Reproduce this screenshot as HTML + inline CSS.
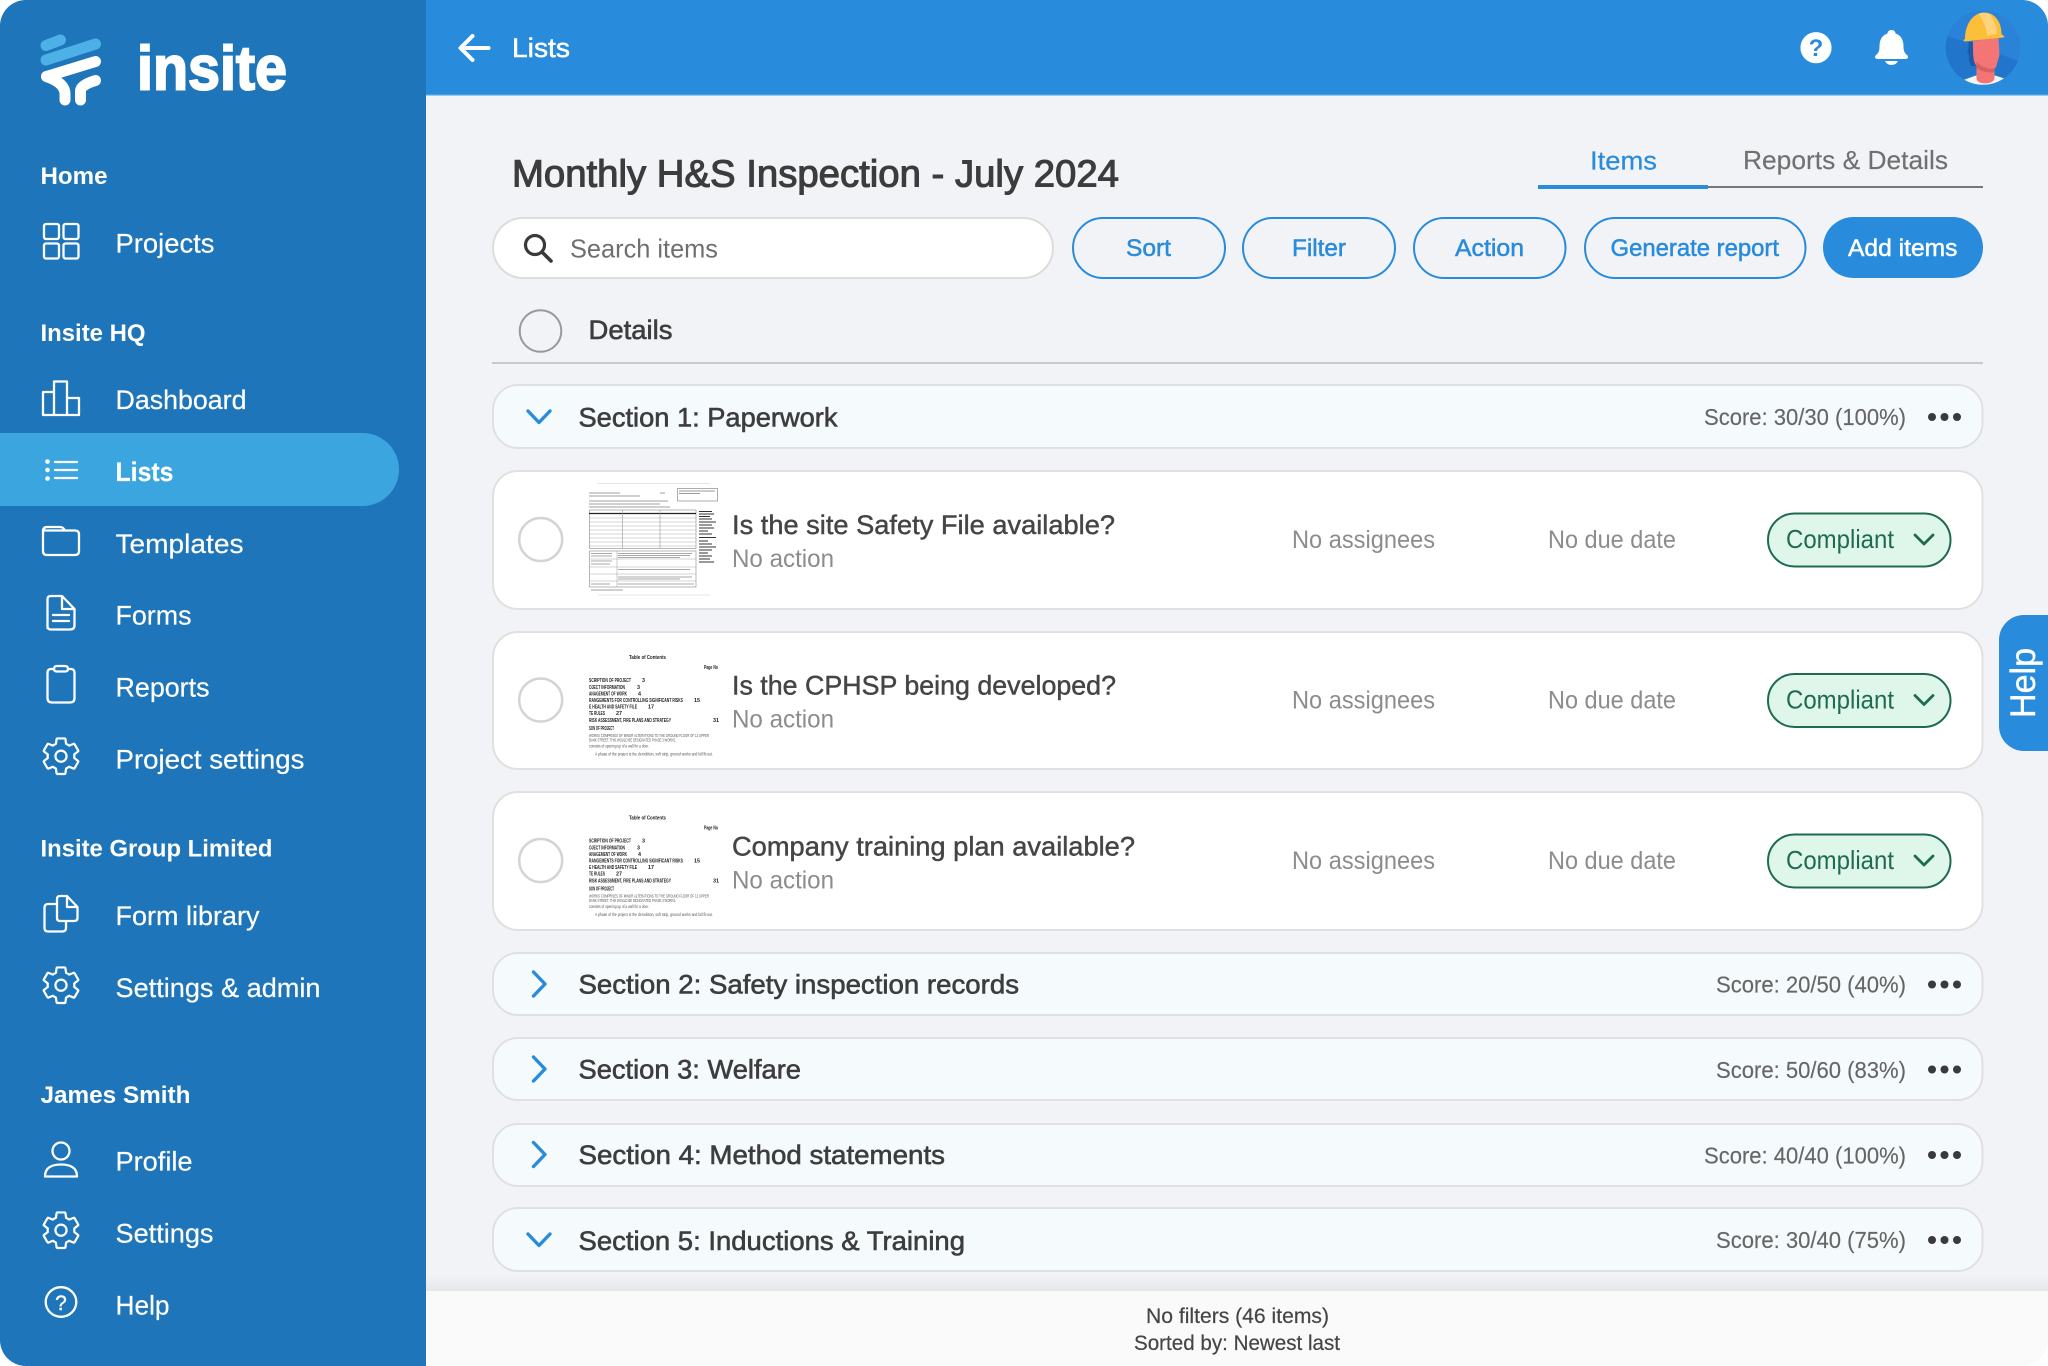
<!DOCTYPE html>
<html lang="en">
<head>
<meta charset="utf-8">
<title>Insite - Lists</title>
<style>
html,body{margin:0;padding:0;background:#fff;width:2048px;height:1366px;overflow:hidden}
svg{display:block}
text{font-family:"Liberation Sans",Arial,sans-serif}
.nav{font-size:27px;fill:#fff;stroke:#fff;stroke-width:.2px}
.head{font-size:24px;fill:#fff;font-weight:700}
.m{stroke-width:.5px}
.ico{fill:none;stroke:#fff;stroke-width:2.3;stroke-linejoin:round;stroke-linecap:round}
.sec{font-size:27px;fill:#3d3d3d;stroke:#3d3d3d;stroke-width:.6px}
.score{font-size:23px;fill:#666;stroke:#666;stroke-width:.15px}
.q{font-size:27px;fill:#454545;stroke:#454545;stroke-width:.45px}
.sub{font-size:25px;fill:#8c8c8c}
.btn{font-size:24px;fill:#288bdb;stroke:#288bdb;stroke-width:.5px}
.cmp{font-size:26px;fill:#1f6b52}
.t{font-size:5.400px;fill:#222;font-weight:700}
.tl{font-size:4.800px;fill:#555}
</style>
</head>
<body>
<svg xmlns="http://www.w3.org/2000/svg" width="2048" height="1366" viewBox="0 0 2048 1366">
<defs>
<clipPath id="page"><rect width="2048" height="1366" rx="26"/></clipPath>
<clipPath id="av"><circle cx="1983" cy="47.500" r="37.300"/></clipPath>
<linearGradient id="fs" x1="0" y1="0" x2="0" y2="1"><stop offset="0" stop-color="#000" stop-opacity="0"/><stop offset="1" stop-color="#000" stop-opacity=".05"/></linearGradient>
<path id="gear" d="M19.14 12.94c.04-.3.06-.61.06-.94 0-.32-.02-.64-.07-.94l2.03-1.58a.49.49 0 0 0 .12-.61l-1.92-3.32a.488.488 0 0 0-.59-.22l-2.39.96c-.5-.38-1.03-.7-1.62-.94l-.36-2.54a.484.484 0 0 0-.48-.41h-3.84c-.24 0-.43.17-.47.41l-.36 2.54c-.59.24-1.13.57-1.62.94l-2.39-.96c-.22-.08-.47 0-.59.22L2.74 8.87c-.12.21-.08.47.12.61l2.03 1.58c-.05.3-.09.63-.09.94s.02.64.07.94l-2.03 1.58a.49.49 0 0 0-.12.61l1.92 3.32c.12.22.37.29.59.22l2.39-.96c.5.38 1.03.7 1.62.94l.36 2.54c.05.24.24.41.48.41h3.84c.24 0 .44-.17.47-.41l.36-2.54c.59-.24 1.13-.56 1.62-.94l2.39.96c.22.08.47 0 .59-.22l1.92-3.32c.12-.22.07-.47-.12-.61l-2.01-1.58z"/>
</defs>
<g clip-path="url(#page)">
<rect width="2048" height="1366" fill="#f2f3f7"/>
<!-- top bar -->
<rect x="426" width="1622" height="95" fill="#288bdb"/>
<rect x="426" y="94" width="1622" height="1.500" fill="#4a9ee2"/>
<path d="M488.500 48H461M472.500 36L460.500 48L472.500 60" fill="none" stroke="#fff" stroke-width="4" stroke-linecap="round" stroke-linejoin="round"/>
<text x="512" y="57" class="nav m" textLength="58" lengthAdjust="spacingAndGlyphs">Lists</text>
<circle cx="1816" cy="47.700" r="15.600" fill="#fff"/>
<text x="1816" y="56" font-size="24" font-weight="700" fill="#288bdb" text-anchor="middle">?</text>
<path d="M1891.500 30c3 0 4 2 4 3.500c6 2 8 7 8 13c0 5 1.500 7 4 9q1.500 3-2 3.500h-28q-3.500-.5-2-3.500c2.500-2 4-4 4-9c0-6 2-11 8-13c0-1.500 1-3.500 4-3.500z" fill="#fff"/>
<path d="M1885 61h13q-2 4-6.500 4t-6.500-4z" fill="#fff"/>
<g clip-path="url(#av)">
<circle cx="1983" cy="47.500" r="37.300" fill="#2a83d8"/>
<path d="M1983 47L1940 34L1940 90L1972 90zM1983 47L2025 64L2015 90L1990 90z" fill="#2176cc"/>
<path d="M1962 80.500L1976 75.500H1995L2006 79L2004 92H1964z" fill="#f5f5f5"/>
<path d="M1968.500 42L1976 42L1976.500 66L1971 66Q1968 60 1969 55Q1966 52 1968.500 48z" fill="#1b5aa8"/>
<path d="M1973 41L1998.500 37.500L1999.500 55L1997 64Q1996 68 1994.500 68.500V78Q1994 83 1985 83.500Q1976.500 83 1976.500 78V66Q1973 62 1973 50z" fill="#f37575"/>
<path d="M1976.500 62Q1985 70 1994.500 68.500V72Q1985 74 1976.500 68z" fill="#da6060"/>
<path d="M1965 39C1965 22 1975 12.500 1984 12.500C1995 12.500 2001.500 22 2001.500 34L2004.500 36.500L2003.500 37.500L1964 41.500L1963.300 40z" fill="#fdbe3a"/>
<path d="M1979 13.500Q1985 12 1990 14.500Q1996 22 1997 33.500L1987.500 35.500Q1985 23 1979 13.500z" fill="#fdd37e"/>
</g>
<!-- sidebar -->
<rect width="426" height="1366" fill="#1f75b9"/>
<path d="M0 433H362A36.500 36.500 0 0 1 399 470A36.500 36.500 0 0 1 362 506H0z" fill="#3ba5e0"/>
<!-- logo -->
<g fill="none" stroke-linecap="round" stroke-linejoin="round" stroke-width="11">
<path d="M46 45.500L60.500 40" stroke="#4db1e8"/>
<path d="M46 60L95.500 44" stroke="#4db1e8"/>
<path d="M95.500 61.500L46.500 76.500" stroke="#fff"/>
<path d="M46.500 76.500Q65 83 65 94V100" stroke="#fff"/>
<path d="M80.500 100V91Q80.500 85 95.500 80.500" stroke="#fff"/>
</g>
<text x="137" y="89.500" font-size="62" font-weight="700" fill="#fff" stroke="#fff" stroke-width="2" textLength="150" lengthAdjust="spacingAndGlyphs">insite</text>
<text x="40.500" y="184" class="head" textLength="67" lengthAdjust="spacingAndGlyphs">Home</text>
<text x="115.500" y="252.500" class="nav" textLength="99" lengthAdjust="spacingAndGlyphs">Projects</text>
<text x="40.500" y="341" class="head" textLength="105" lengthAdjust="spacingAndGlyphs">Insite HQ</text>
<text x="115.500" y="409" class="nav" textLength="131" lengthAdjust="spacingAndGlyphs">Dashboard</text>
<text x="115.500" y="481" class="nav" font-weight="700" textLength="58" lengthAdjust="spacingAndGlyphs">Lists</text>
<text x="115.500" y="553" class="nav" textLength="128" lengthAdjust="spacingAndGlyphs">Templates</text>
<text x="115.500" y="624.500" class="nav" textLength="76" lengthAdjust="spacingAndGlyphs">Forms</text>
<text x="115.500" y="696.500" class="nav" textLength="94" lengthAdjust="spacingAndGlyphs">Reports</text>
<text x="115.500" y="768.500" class="nav" textLength="189" lengthAdjust="spacingAndGlyphs">Project settings</text>
<text x="40.500" y="856.500" class="head" textLength="232" lengthAdjust="spacingAndGlyphs">Insite Group Limited</text>
<text x="115.500" y="925" class="nav" textLength="144" lengthAdjust="spacingAndGlyphs">Form library</text>
<text x="115.500" y="997" class="nav" textLength="205" lengthAdjust="spacingAndGlyphs">Settings &amp; admin</text>
<text x="40.500" y="1103" class="head" textLength="150" lengthAdjust="spacingAndGlyphs">James Smith</text>
<text x="115.500" y="1170.700" class="nav" textLength="77" lengthAdjust="spacingAndGlyphs">Profile</text>
<text x="115.500" y="1242.700" class="nav" textLength="98" lengthAdjust="spacingAndGlyphs">Settings</text>
<text x="115.500" y="1314.700" class="nav" textLength="54" lengthAdjust="spacingAndGlyphs">Help</text>
<!-- sidebar icons -->
<g class="ico">
<rect x="44" y="224" width="15" height="15" rx="2"/><rect x="63.500" y="224" width="15" height="15" rx="2"/>
<rect x="44" y="243.500" width="15" height="15" rx="2"/><rect x="63.500" y="243.500" width="15" height="15" rx="2"/>
<path d="M43 415V392H54V415zM54 415V381.500H67V415zM67 415V398H79V415zM43 415H79"/>
<path d="M55 462H77M55 470H77M55 478H77"/>
<path d="M43 531.500Q43 527 47 527H60Q63 527 65 530.500H43M43 530.500V551Q43 555 47 555H75Q79 555 79 551V534.500Q79 530.500 75 530.500H65"/>
<path d="M47.500 628V599Q47.500 596 51 596H62L74.500 609V625Q74.500 629.500 70 629.500H51Q47.500 629.500 47.500 626zM62 596V609H74.500M53 615H69M53 621H69"/>
<path d="M54 669H51Q47.500 669 47.500 673V698Q47.500 702.500 52 702.500H70Q74.500 702.500 74.500 698V673Q74.500 669 71 669H68M54 669Q54 666 57 666H65Q68 666 68 669Q68 671.500 65 671.500H57Q54 671.500 54 669z"/>
<path d="M57 904H48Q44.500 904 44.500 908V928Q44.500 931.500 48 931.500H62Q66 931.500 66 928V921M57 899Q57 896 60 896H67L77.500 907V918Q77.500 921 74 921H60Q57 921 57 918zM67 896V907H77.500"/>
<path d="M52.500 1151a8.500 8.500 0 1 0 17 0a8.500 8.500 0 1 0-17 0zM45 1176.500Q45 1164.500 61 1164.500Q77 1164.500 77 1176.500z"/>
<ellipse cx="61" cy="1302" rx="15.300" ry="14.800"/>
</g>
<circle cx="47.500" cy="461.500" r="2.300" fill="#fff"/><circle cx="47.500" cy="470" r="2.300" fill="#fff"/><circle cx="47.500" cy="478.500" r="2.300" fill="#fff"/>
<text x="61" y="1310" font-size="21" fill="#fff" stroke="#fff" stroke-width=".4" text-anchor="middle">?</text>
<g fill="none" stroke="#fff" stroke-linejoin="round">
<g transform="translate(38.800 734) scale(1.850)" stroke-width="1.200"><use href="#gear"/><circle cx="12" cy="12" r="3"/></g>
<g transform="translate(38.800 963) scale(1.850)" stroke-width="1.200"><use href="#gear"/><circle cx="12" cy="12" r="3"/></g>
<g transform="translate(38.800 1208) scale(1.850)" stroke-width="1.200"><use href="#gear"/><circle cx="12" cy="12" r="3"/></g>
</g>
<!-- title + tabs -->
<text x="512" y="186.700" font-size="38" fill="#3c3c3c" stroke="#3c3c3c" stroke-width="1.100" textLength="607" lengthAdjust="spacingAndGlyphs">Monthly H&amp;S Inspection - July 2024</text>
<text x="1590" y="169.500" font-size="26" fill="#288bdb" stroke="#288bdb" stroke-width=".2" textLength="67" lengthAdjust="spacingAndGlyphs">Items</text>
<text x="1743" y="169" font-size="26" fill="#707070" stroke="#707070" stroke-width=".15" textLength="205" lengthAdjust="spacingAndGlyphs">Reports &amp; Details</text>
<rect x="1708" y="186" width="275" height="2" fill="#777"/>
<rect x="1538" y="185" width="170" height="4" fill="#288bdb"/>
<!-- search -->
<rect x="493" y="218" width="560" height="60" rx="30" fill="#fff" stroke="#dcdcdc" stroke-width="2"/>
<circle cx="535" cy="245" r="9.500" fill="none" stroke="#3a3a3a" stroke-width="3.200"/>
<path d="M542 252L551 261" stroke="#3a3a3a" stroke-width="3.600" stroke-linecap="round"/>
<text x="570" y="257.500" font-size="26" fill="#6f6f6f" textLength="148" lengthAdjust="spacingAndGlyphs">Search items</text>
<!-- buttons -->
<g fill="none" stroke="#288bdb" stroke-width="2">
<rect x="1073" y="218" width="152" height="60" rx="30"/>
<rect x="1243" y="218" width="152" height="60" rx="30"/>
<rect x="1414" y="218" width="151.500" height="60" rx="30"/>
<rect x="1585" y="218" width="220.500" height="60" rx="30"/>
</g>
<rect x="1823" y="217" width="160" height="61" rx="30.500" fill="#288bdb"/>
<text x="1126" y="256" class="btn" textLength="45" lengthAdjust="spacingAndGlyphs">Sort</text>
<text x="1292" y="256" class="btn" textLength="54" lengthAdjust="spacingAndGlyphs">Filter</text>
<text x="1455" y="256" class="btn" textLength="69" lengthAdjust="spacingAndGlyphs">Action</text>
<text x="1610.500" y="256" class="btn" textLength="168.500" lengthAdjust="spacingAndGlyphs">Generate report</text>
<text x="1848" y="256" class="btn" style="fill:#fff;stroke:#fff" textLength="109.500" lengthAdjust="spacingAndGlyphs">Add items</text>
<!-- details -->
<circle cx="540.500" cy="331" r="20.800" fill="none" stroke="#999" stroke-width="2"/>
<text x="588.500" y="339" class="sec" textLength="84" lengthAdjust="spacingAndGlyphs">Details</text>
<rect x="492" y="362" width="1491" height="2" fill="#c9c9c9"/>
<!-- section rows -->
<g fill="#f5fafd" stroke="#e0e0e0" stroke-width="2">
<rect x="493" y="385" width="1489.500" height="63" rx="25"/>
<rect x="493" y="953" width="1489.500" height="62" rx="25"/>
<rect x="493" y="1038" width="1489.500" height="62" rx="25"/>
<rect x="493" y="1124" width="1489.500" height="62" rx="25"/>
<rect x="493" y="1208" width="1489.500" height="63" rx="25"/>
</g>
<g fill="none" stroke="#288bdb" stroke-width="3.400" stroke-linecap="round" stroke-linejoin="round">
<path d="M528 411L539 422.500L550 411"/>
<path d="M533.500 972L545 984L533.500 996"/>
<path d="M533.500 1057L545 1069L533.500 1081"/>
<path d="M533.500 1142.500L545 1154.500L533.500 1166.500"/>
<path d="M528 1234L539 1245.500L550 1234"/>
</g>
<text x="578.500" y="426.500" class="sec" textLength="259" lengthAdjust="spacingAndGlyphs">Section 1: Paperwork</text>
<text x="578.500" y="993.700" class="sec" textLength="440.500" lengthAdjust="spacingAndGlyphs">Section 2: Safety inspection records</text>
<text x="578.500" y="1078.700" class="sec" textLength="222.500" lengthAdjust="spacingAndGlyphs">Section 3: Welfare</text>
<text x="578.500" y="1164.200" class="sec" textLength="366.500" lengthAdjust="spacingAndGlyphs">Section 4: Method statements</text>
<text x="578.500" y="1250" class="sec" textLength="386.500" lengthAdjust="spacingAndGlyphs">Section 5: Inductions &amp; Training</text>
<text x="1704" y="425" class="score" textLength="202" lengthAdjust="spacingAndGlyphs">Score: 30/30 (100%)</text>
<text x="1716" y="992.500" class="score" textLength="190" lengthAdjust="spacingAndGlyphs">Score: 20/50 (40%)</text>
<text x="1716" y="1078" class="score" textLength="190" lengthAdjust="spacingAndGlyphs">Score: 50/60 (83%)</text>
<text x="1704" y="1163.500" class="score" textLength="202" lengthAdjust="spacingAndGlyphs">Score: 40/40 (100%)</text>
<text x="1716" y="1248" class="score" textLength="190" lengthAdjust="spacingAndGlyphs">Score: 30/40 (75%)</text>
<g fill="#3a3a3a">
<circle cx="1932" cy="417" r="4"/><circle cx="1944.500" cy="417" r="4"/><circle cx="1957" cy="417" r="4"/>
<circle cx="1932" cy="984.500" r="4"/><circle cx="1944.500" cy="984.500" r="4"/><circle cx="1957" cy="984.500" r="4"/>
<circle cx="1932" cy="1069.500" r="4"/><circle cx="1944.500" cy="1069.500" r="4"/><circle cx="1957" cy="1069.500" r="4"/>
<circle cx="1932" cy="1155" r="4"/><circle cx="1944.500" cy="1155" r="4"/><circle cx="1957" cy="1155" r="4"/>
<circle cx="1932" cy="1240" r="4"/><circle cx="1944.500" cy="1240" r="4"/><circle cx="1957" cy="1240" r="4"/>
</g>
<!-- cards -->
<g fill="#fff" stroke="#e0e0e0" stroke-width="2">
<rect x="493" y="471" width="1489.500" height="138" rx="25"/>
<rect x="493" y="632" width="1489.500" height="137" rx="25"/>
<rect x="493" y="792" width="1489.500" height="138" rx="25"/>
</g>
<g fill="none" stroke="#d4d4d4" stroke-width="2.500">
<circle cx="540.700" cy="539.500" r="21.500"/><circle cx="540.700" cy="700" r="21.500"/><circle cx="540.700" cy="860.500" r="21.500"/>
</g>
<!-- thumb 1 -->
<g fill="none" stroke="#555" stroke-width=".6">
<path d="M598 483.500H710M598 595H710" stroke="#ccc"/>
<path d="M589 493H620M589 496H640M660 493H665M589 501H668M589 504H660M589 507H670" stroke="#444"/>
<rect x="677.500" y="488.500" width="40" height="12.500" stroke="#777"/>
<path d="M679 491H715M679 493.500H700" stroke="#333"/>
<rect x="589.500" y="510" width="106.500" height="38.500" stroke="#888"/>
<path d="M589 513.500H696" stroke="#222" stroke-width="1.200"/>
<path d="M589 518H696M589 522H696M589 526H696M589 530H696M589 534H696M589 538H696M589 542H696M589 546H696" stroke="#aaa"/>
<path d="M622.500 510V548M660 510V548" stroke="#999"/>
<rect x="589.500" y="551" width="106.500" height="36" stroke="#888"/>
<path d="M617 551V587M589 559H696M589 567H696M589 574H696M589 581H696" stroke="#aaa"/>
<path d="M618 553.500H692M618 555.500H690M618 557.500H680M591 553.500H612M591 556H612M591 561H612M591 564H610M618 569.500H690M618 577H692M618 579H680M591 584H610M618 584H694" stroke="#555"/>
<path d="M699 511.500H712M699 514H714M699 516.500H710M699 519H712M699 522H716M699 525H712M699 528H714M699 531H708M699 534H712M699 537.500H716M699 541H708M699 544H712M699 547H716M699 550H712M699 553H708M699 556H712M699 559H710M699 562H714" stroke="#333" stroke-width=".9"/>
<path d="M591 590H623" stroke="#444"/>
</g>
<!-- thumb 2 -->
<g>
<text x="629" y="659" class="t" textLength="37" lengthAdjust="spacingAndGlyphs">Table of Contents</text>
<text x="704" y="669" class="t" textLength="14" lengthAdjust="spacingAndGlyphs">Page No</text>
<text x="589" y="682" class="t" textLength="42" lengthAdjust="spacingAndGlyphs">SCRIPTION OF PROJECT</text><text x="642" y="682" class="t">3</text>
<text x="589" y="689" class="t" textLength="36" lengthAdjust="spacingAndGlyphs">OJECT INFORMATION</text><text x="637" y="689" class="t">3</text>
<text x="589" y="695.500" class="t" textLength="38" lengthAdjust="spacingAndGlyphs">ANAGEMENT OF WORK</text><text x="638" y="695.500" class="t">4</text>
<text x="589" y="702" class="t" textLength="94" lengthAdjust="spacingAndGlyphs">RANGEMENTS FOR CONTROLLING SIGNIFICANT RISKS</text><text x="694" y="702" class="t">15</text>
<text x="589" y="708.500" class="t" textLength="48" lengthAdjust="spacingAndGlyphs">E HEALTH AND SAFETY FILE</text><text x="648" y="708.500" class="t">17</text>
<text x="589" y="715" class="t" textLength="16" lengthAdjust="spacingAndGlyphs">TE RULES</text><text x="616" y="715" class="t">27</text>
<text x="589" y="722" class="t" textLength="82" lengthAdjust="spacingAndGlyphs">RISK ASSESSMENT, FIRE PLANS AND STRATEGY</text><text x="713" y="722" class="t">31</text>
<text x="589" y="730" class="t" textLength="25" lengthAdjust="spacingAndGlyphs">SON OF PROJECT</text>
<text x="589" y="737" class="tl" textLength="120" lengthAdjust="spacingAndGlyphs">WORKS COMPRISES OF MINOR ALTERATIONS TO THE GROUND FLOOR OF 12 UPPER</text>
<text x="589" y="741.500" class="tl" textLength="87" lengthAdjust="spacingAndGlyphs">BANK STREET. THIS WOULD BE DESIGNATED PHASE 3 WORKS.</text>
<text x="589" y="747.500" class="tl" textLength="60" lengthAdjust="spacingAndGlyphs">consists of opening up of a wall for a door.</text>
<text x="595" y="755.500" class="tl" textLength="118" lengthAdjust="spacingAndGlyphs">A phase of the project is the demolition, soft strip, ground works and full fit-out.</text>
</g>
<!-- thumb 3 -->
<g>
<text x="629" y="819.600" class="t" textLength="37" lengthAdjust="spacingAndGlyphs">Table of Contents</text>
<text x="704" y="829.600" class="t" textLength="14" lengthAdjust="spacingAndGlyphs">Page No</text>
<text x="589" y="842.600" class="t" textLength="42" lengthAdjust="spacingAndGlyphs">SCRIPTION OF PROJECT</text><text x="642" y="842.600" class="t">3</text>
<text x="589" y="849.600" class="t" textLength="36" lengthAdjust="spacingAndGlyphs">OJECT INFORMATION</text><text x="637" y="849.600" class="t">3</text>
<text x="589" y="856.100" class="t" textLength="38" lengthAdjust="spacingAndGlyphs">ANAGEMENT OF WORK</text><text x="638" y="856.100" class="t">4</text>
<text x="589" y="862.600" class="t" textLength="94" lengthAdjust="spacingAndGlyphs">RANGEMENTS FOR CONTROLLING SIGNIFICANT RISKS</text><text x="694" y="862.600" class="t">15</text>
<text x="589" y="869.100" class="t" textLength="48" lengthAdjust="spacingAndGlyphs">E HEALTH AND SAFETY FILE</text><text x="648" y="869.100" class="t">17</text>
<text x="589" y="875.600" class="t" textLength="16" lengthAdjust="spacingAndGlyphs">TE RULES</text><text x="616" y="875.600" class="t">27</text>
<text x="589" y="882.600" class="t" textLength="82" lengthAdjust="spacingAndGlyphs">RISK ASSESSMENT, FIRE PLANS AND STRATEGY</text><text x="713" y="882.600" class="t">31</text>
<text x="589" y="890.600" class="t" textLength="25" lengthAdjust="spacingAndGlyphs">SON OF PROJECT</text>
<text x="589" y="897.600" class="tl" textLength="120" lengthAdjust="spacingAndGlyphs">WORKS COMPRISES OF MINOR ALTERATIONS TO THE GROUND FLOOR OF 12 UPPER</text>
<text x="589" y="902.100" class="tl" textLength="87" lengthAdjust="spacingAndGlyphs">BANK STREET. THIS WOULD BE DESIGNATED PHASE 3 WORKS.</text>
<text x="589" y="908.100" class="tl" textLength="60" lengthAdjust="spacingAndGlyphs">consists of opening up of a wall for a door.</text>
<text x="595" y="916.100" class="tl" textLength="118" lengthAdjust="spacingAndGlyphs">A phase of the project is the demolition, soft strip, ground works and full fit-out.</text>
</g>
<!-- card text -->
<text x="732" y="534" class="q" textLength="383" lengthAdjust="spacingAndGlyphs">Is the site Safety File available?</text>
<text x="732" y="567" class="sub" textLength="102" lengthAdjust="spacingAndGlyphs">No action</text>
<text x="1292" y="548" class="sub" textLength="143" lengthAdjust="spacingAndGlyphs">No assignees</text>
<text x="1548" y="548" class="sub" textLength="128" lengthAdjust="spacingAndGlyphs">No due date</text>
<text x="732" y="694.600" class="q" textLength="384" lengthAdjust="spacingAndGlyphs">Is the CPHSP being developed?</text>
<text x="732" y="727.600" class="sub" textLength="102" lengthAdjust="spacingAndGlyphs">No action</text>
<text x="1292" y="708.600" class="sub" textLength="143" lengthAdjust="spacingAndGlyphs">No assignees</text>
<text x="1548" y="708.600" class="sub" textLength="128" lengthAdjust="spacingAndGlyphs">No due date</text>
<text x="732" y="855.300" class="q" textLength="403" lengthAdjust="spacingAndGlyphs">Company training plan available?</text>
<text x="732" y="888.300" class="sub" textLength="102" lengthAdjust="spacingAndGlyphs">No action</text>
<text x="1292" y="869" class="sub" textLength="143" lengthAdjust="spacingAndGlyphs">No assignees</text>
<text x="1548" y="869" class="sub" textLength="128" lengthAdjust="spacingAndGlyphs">No due date</text>
<!-- compliant pills -->
<g fill="#dff6ea" stroke="#1f6b52" stroke-width="2">
<rect x="1768" y="513.500" width="182.500" height="53" rx="26.500"/>
<rect x="1768" y="674" width="182.500" height="53" rx="26.500"/>
<rect x="1768" y="834.500" width="182.500" height="53" rx="26.500"/>
</g>
<text x="1786" y="548" class="cmp" textLength="108" lengthAdjust="spacingAndGlyphs">Compliant</text>
<text x="1786" y="708.500" class="cmp" textLength="108" lengthAdjust="spacingAndGlyphs">Compliant</text>
<text x="1786" y="869" class="cmp" textLength="108" lengthAdjust="spacingAndGlyphs">Compliant</text>
<g fill="none" stroke="#1f6b52" stroke-width="2.800" stroke-linecap="round" stroke-linejoin="round">
<path d="M1915 535L1924 544L1933 535"/>
<path d="M1915 695.500L1924 704.500L1933 695.500"/>
<path d="M1915 856L1924 865L1933 856"/>
</g>
<!-- help tab -->
<path d="M2048 615H2024A25 25 0 0 0 1999 640V726A25 25 0 0 0 2024 751H2048z" fill="#288bdb"/>
<text transform="translate(2035 718) rotate(-90)" font-size="35" fill="#fff" stroke="#fff" stroke-width=".4" textLength="70" lengthAdjust="spacingAndGlyphs">Help</text>
<!-- footer -->
<rect x="426" y="1275" width="1622" height="16" fill="url(#fs)"/>
<rect x="426" y="1291" width="1622" height="75" fill="#fafafa"/>
<text x="1146" y="1323" font-size="21" fill="#454545" stroke="#454545" stroke-width=".2" textLength="183" lengthAdjust="spacingAndGlyphs">No filters (46 items)</text>
<text x="1134" y="1350" font-size="21" fill="#454545" stroke="#454545" stroke-width=".2" textLength="206" lengthAdjust="spacingAndGlyphs">Sorted by: Newest last</text>
</g>
</svg>
</body>
</html>
